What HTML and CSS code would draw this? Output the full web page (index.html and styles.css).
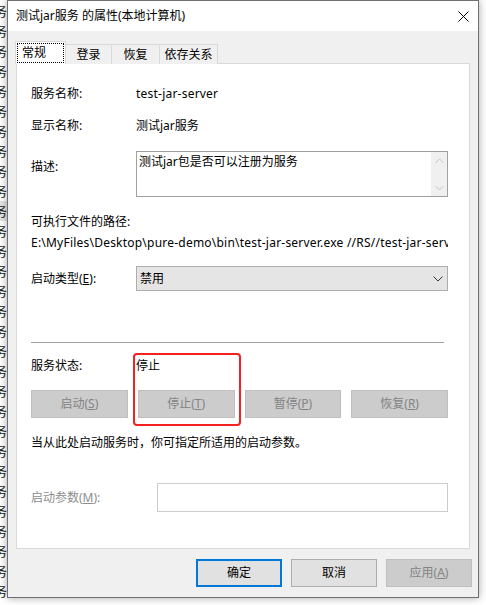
FILE: index.html
```html
<!DOCTYPE html>
<html lang="zh-CN">
<head>
    <meta charset="UTF-8">
    <meta name="viewport" content="width=device-width, initial-scale=1.0">
    <title>测试jar服务 的属性(本地计算机)</title>
    <link rel="stylesheet" href="styles.css">
</head>
<body>

    <div id="screen">

        <div id="behind">
            <div>服务</div><div>服务</div><div>服务</div><div>服务</div>
            <div>服务</div><div>服务</div><div>服务</div><div>服务</div>
            <div>服务</div><div>服务</div><div class="hl">服务</div><div>服务</div>
            <div>服务</div><div>服务</div><div>服务</div><div>服务</div>
            <div>服务</div><div>服务</div><div>服务</div><div>服务</div>
            <div>服务</div><div>服务</div><div>服务</div><div>服务</div>
            <div>服务</div><div>服务</div><div>服务</div><div>服务</div>
            <div>服务</div><div>服务</div>
        </div>

        <div id="dialog">

            <div class="titlebar">
                <span>测试jar服务 的属性(本地计算机)</span>
                <svg class="close" width="11" height="11" viewBox="0 0 11 11">
                    <path d="M0.5 0.5 L10.5 10.5 M10.5 0.5 L0.5 10.5" stroke="#000" stroke-width="1" fill="none"/>
                </svg>
            </div>

            <div class="dlg-body">

                <div class="tabs">
                    <div class="tab active"><span class="focus">常规</span></div>
                    <div class="tab w46">登录</div>
                    <div class="tab w48">恢复</div>
                    <div class="tab w58">依存关系</div>
                </div>

                <div class="panel">

                    <div class="row r-name">
                        <span class="lbl">服务名称:</span>
                        <span class="latin">test-jar-server</span>
                    </div>

                    <div class="row r-disp">
                        <span class="lbl">显示名称:</span>
                        <span>测试jar服务</span>
                    </div>

                    <div class="row r-desc">
                        <span class="lbl">描述:</span>
                        <div class="memo">
                            <div class="memo-text">测试jar包是否可以注册为服务</div>
                            <div class="vscroll">
                                <svg width="9" height="6" viewBox="0 0 9 6"><path d="M0.5 5 L4.5 1 L8.5 5" stroke="#c2c2c2" fill="none"/></svg>
                                <svg width="9" height="6" viewBox="0 0 9 6"><path d="M0.5 1 L4.5 5 L8.5 1" stroke="#c2c2c2" fill="none"/></svg>
                            </div>
                        </div>
                    </div>

                    <div class="path-lbl">可执行文件的路径:</div>
                    <div class="path latin">E:\MyFiles\Desktop\pure-demo\bin\test-jar-server.exe //RS//test-jar-server</div>

                    <div class="row r-type">
                        <span class="lbl">启动类型(<u>E</u>):</span>
                        <div class="combo">
                            <span>禁用</span>
                            <svg width="10" height="6" viewBox="0 0 10 6"><path d="M0.5 0.5 L5 5 L9.5 0.5" stroke="#333" fill="none"/></svg>
                        </div>
                    </div>

                    <div class="sep"></div>

                    <div class="status">
                        <div class="row r-status">
                            <span class="lbl">服务状态:</span>
                            <span>停止</span>
                        </div>

                        <div class="btns">
                            <button disabled>启动(<u>S</u>)</button>
                            <button disabled>停止(<u>T</u>)</button>
                            <button disabled>暂停(<u>P</u>)</button>
                            <button disabled>恢复(<u>R</u>)</button>
                        </div>

                        <div class="mark"></div>
                    </div>

                    <div class="hint">当从此处启动服务时，你可指定所适用的启动参数。</div>

                    <div class="row r-param">
                        <span class="lbl dim">启动参数(<u>M</u>):</span>
                        <div class="param"></div>
                    </div>

                </div>

                <div class="actions">
                    <button class="ok">确定</button>
                    <button>取消</button>
                    <button disabled>应用(<u>A</u>)</button>
                </div>

            </div>
        </div>

    </div>

</body>
</html>
```

FILE: styles.css
```css
* {
    box-sizing: border-box;
}

body {
    margin: 0;
    background: #fff;
    font-family: "Noto Sans", "Noto Sans CJK SC", sans-serif;
    font-size: 12px;
    line-height: 20px;
    color: #000;
    overflow: hidden;
}

u {
    text-decoration: underline;
    text-underline-offset: 1px;
}

.latin {
    letter-spacing: 0.22px;
}

#screen {
    display: flex;
    height: 605px;
}

/* window behind the dialog */
#behind {
    width: 7px;
    flex: none;
    overflow: hidden;
    padding-top: 1px;
    background: #fff;
}

#behind > div {
    display: flex;
    justify-content: flex-end;
    height: 20px;
    white-space: nowrap;
    color: #1a1a1a;
    font-size: 13px;
}

#behind > .hl {
    background: #e5e5e5;
}

#dialog {
    width: 472px;
    height: 598px;
    flex: none;
    border: 1px solid #6f6f6f;
    background: #f0f0f0;
    box-shadow: 0 0 8px rgba(0, 0, 0, 0.35);
}

.titlebar {
    height: 30px;
    background: #fff;
    display: flex;
    align-items: center;
    justify-content: space-between;
    padding: 0 9px 0 8px;
}

.dlg-body {
    padding-top: 10px;
}

.tabs {
    display: flex;
    align-items: flex-end;
    padding-left: 7px;
    height: 23px;
    margin-bottom: -1px;
    position: relative;
    z-index: 1;
}

.tab {
    height: 20px;
    border: 1px solid #d9d9d9;
    border-bottom: none;
    margin-left: -1px;
    display: flex;
    align-items: center;
    justify-content: center;
    background: #f0f0f0;
}

.tab.active {
    width: 51px;
    height: 23px;
    margin-left: 0;
    background: #fff;
    padding: 1px 1px 0;
    z-index: 2;
}

.focus {
    display: flex;
    align-items: center;
    padding-left: 4px;
    width: 47px;
    height: 20px;
    border: 1px dotted #000;
    margin-bottom: 1px;
}

.w46 { width: 47px; }
.w48 { width: 49px; }
.w58 { width: 59px; }

.panel {
    margin-left: 8px;
    width: 454px;
    height: 486px;
    background: #fff;
    border: 1px solid #d9d9d9;
    padding: 0 21px 0 14px;
}

.row {
    display: flex;
    align-items: center;
}

.lbl {
    width: 105px;
    flex: none;
}

.r-name { margin-top: 20px; }
.r-disp { margin-top: 12px; }

.r-desc {
    margin-top: 15px;
    align-items: flex-start;
}

.r-desc .lbl {
    padding-top: 6px;
}

.memo {
    flex: 1;
    height: 46px;
    border: 1px solid #a0a0a0;
    display: flex;
}

.memo-text {
    flex: 1;
    padding: 0 2px;
}

.vscroll {
    width: 16px;
    background: #f0f0f0;
    display: flex;
    flex-direction: column;
    justify-content: space-between;
    align-items: center;
    padding: 6px 0 5px;
}

.path-lbl {
    margin-top: 15px;
}

.path {
    margin-top: 1px;
    white-space: nowrap;
    overflow: hidden;
}

.r-type {
    margin-top: 13px;
}

.combo {
    flex: 1;
    height: 25px;
    border: 1px solid #adadad;
    background: #e5e5e5;
    display: flex;
    align-items: center;
    justify-content: space-between;
    padding: 0 4px 0 3px;
}

.sep {
    margin-top: 51px;
    margin-right: 4px;
    border-top: 1px solid #a0a0a0;
}

.status {
    position: relative;
}

.r-status {
    margin-top: 13px;
}

.btns {
    margin-top: 14px;
    display: grid;
    grid-template-columns: repeat(4, 1fr);
    column-gap: 10px;
}

button {
    height: 28px;
    font: inherit;
    border: 1px solid #adadad;
    background: #e1e1e1;
    color: #000;
    padding: 0;
}

button:disabled {
    background: #cccccc;
    border-color: #bfbfbf;
    color: #838383;
}

/* red annotation round the state */
.mark {
    position: absolute;
    left: 102px;
    top: -3px;
    width: 108px;
    height: 73px;
    border: 2px solid #f52020;
    border-radius: 4px;
}

.hint {
    margin-top: 15px;
}

.r-param {
    margin-top: 30px;
}

.r-param .lbl {
    width: 126px;
}

.dim {
    color: #8d8d8d;
}

.param {
    flex: 1;
    height: 29px;
    border: 1px solid #cccccc;
}

.actions {
    display: flex;
    justify-content: flex-end;
    gap: 9px;
    margin-top: 10px;
    padding-right: 6px;
}

.actions button {
    width: 86px;
}

.actions .ok {
    border: 2px solid #0078d7;
}
```
